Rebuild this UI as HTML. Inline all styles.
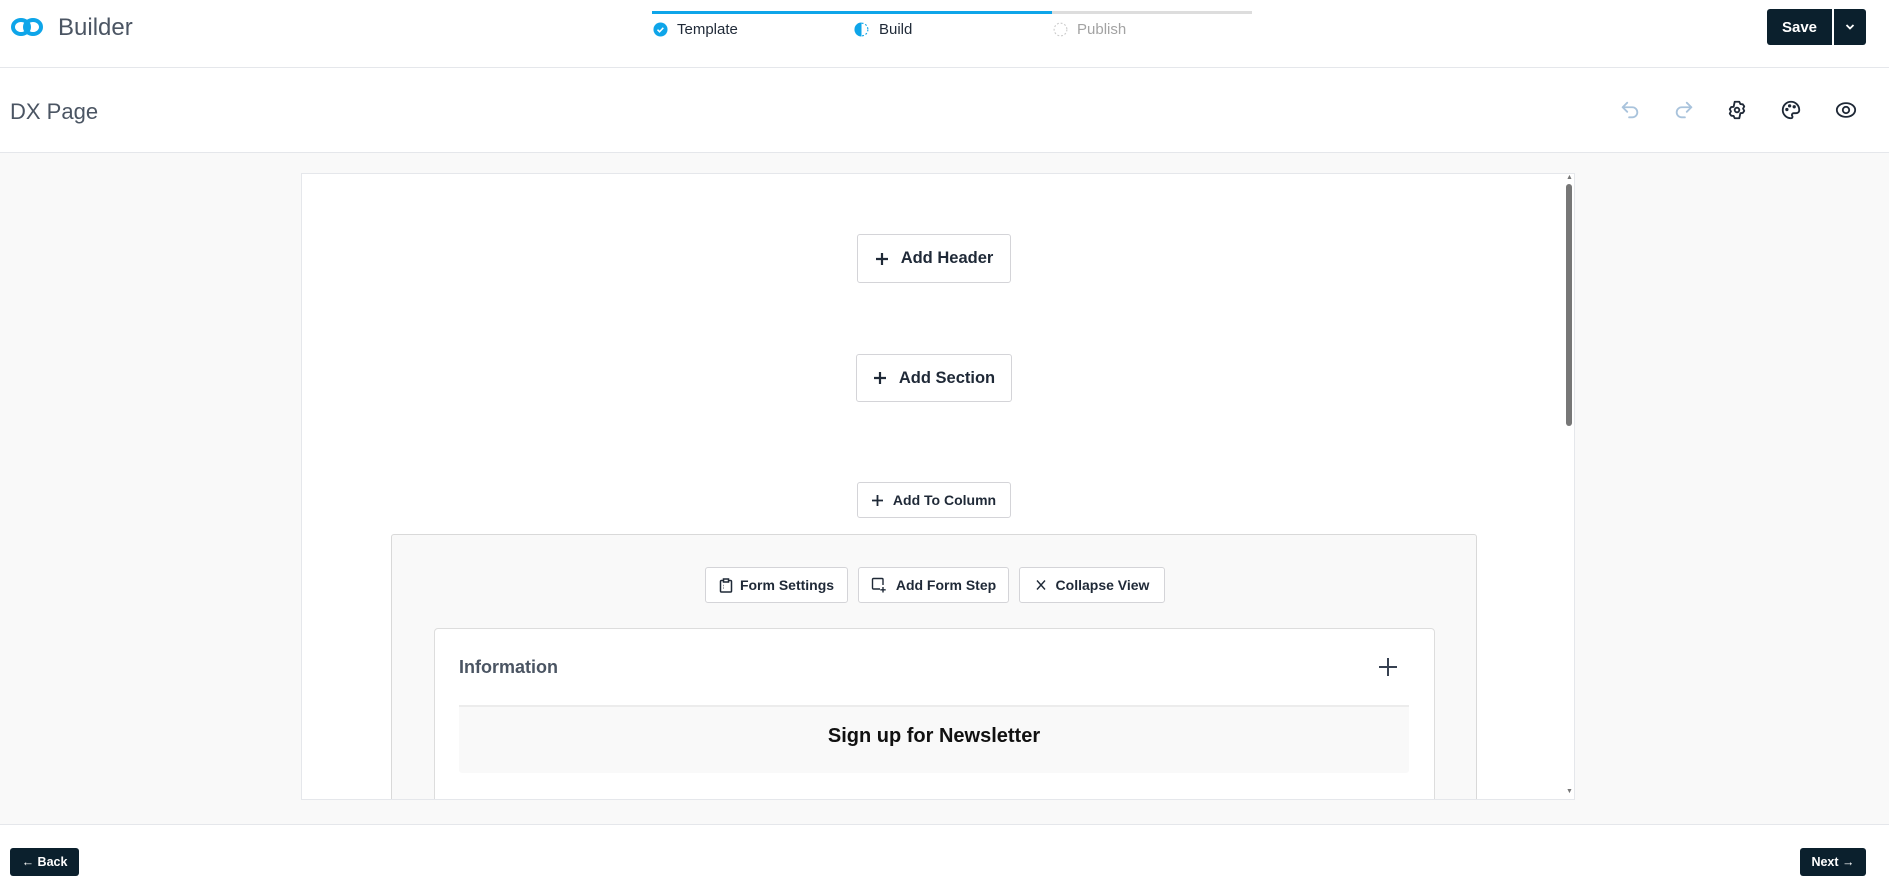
<!DOCTYPE html>
<html><head><meta charset="utf-8"><style>
*{box-sizing:border-box;margin:0;padding:0}
body{width:1889px;height:889px;position:relative;background:#fff;font-family:"Liberation Sans",Arial,sans-serif;overflow:hidden;color:#1f2937}
.abs{position:absolute}
.btn{position:absolute;background:#fff;border:1px solid #d4d4d8;border-radius:3px;display:flex;align-items:center;justify-content:center;font-weight:700;color:#1f2937;white-space:nowrap}
.dark{position:absolute;background:#0b202d;color:#fff;border-radius:3px;font-weight:700;display:flex;align-items:center;justify-content:center}
svg{display:block}
</style></head><body>
<div class="abs" style="left:0;top:67px;width:1889px;height:1px;background:#e5e7eb"></div>
<svg class="abs" style="left:10px;top:16px" width="34" height="22" viewBox="0 0 34 22"><g fill="none" stroke="#0ea5e9" stroke-width="4"><ellipse cx="11" cy="11" rx="8" ry="7"/><ellipse cx="23" cy="11" rx="8" ry="7"/></g></svg>
<div class="abs" style="left:58px;top:14px;font-size:24px;color:#4b5563">Builder</div>
<div class="abs" style="left:652px;top:11px;width:600px;height:3px;background:#ddd"></div>
<div class="abs" style="left:652px;top:11px;width:400px;height:3px;background:#0ea5e9"></div>
<svg class="abs" style="left:653px;top:22px" width="15" height="15" viewBox="0 0 16 16"><circle cx="8" cy="8" r="7.5" fill="#0ea5e9"/><path d="M4.8 8.2l2.2 2.2 4-4.2" stroke="#fff" stroke-width="1.6" fill="none"/></svg>
<div class="abs" style="left:677px;top:21px;font-size:15px;color:#1f2937">Template</div>
<svg class="abs" style="left:854px;top:22px" width="15" height="15" viewBox="0 0 16 16"><path d="M8 .5A7.5 7.5 0 0 0 8 15.5Z" fill="#0ea5e9"/><circle cx="8" cy="8" r="6.8" fill="none" stroke="#0ea5e9" stroke-width="1.2" stroke-dasharray="2 2"/></svg>
<div class="abs" style="left:879px;top:21px;font-size:15px">Build</div>
<svg class="abs" style="left:1053px;top:22px" width="15" height="15" viewBox="0 0 16 16"><circle cx="8" cy="8" r="6.8" fill="none" stroke="#ccc" stroke-width="1.2" stroke-dasharray="2 2"/></svg>
<div class="abs" style="left:1077px;top:21px;font-size:15px;color:#a3a3a3">Publish</div>
<div class="dark" style="left:1767px;top:9px;width:65px;height:36px;font-size:15px;border-radius:3px 0 0 3px">Save</div>
<div class="dark" style="left:1834px;top:9px;width:32px;height:36px;border-radius:0 3px 3px 0"><svg width="10" height="6" viewBox="0 0 10 6"><path d="M1.5 1l3.5 3.5L8.5 1" stroke="#fff" stroke-width="1.8" fill="none"/></svg></div>
<div class="abs" style="left:10px;top:99px;font-size:22px;color:#4b5563">DX Page</div>
<svg class="abs" style="left:1619px;top:99px" width="22" height="22" viewBox="0 0 24 24" fill="none" stroke="#a9c3dc" stroke-width="2" stroke-linecap="round" stroke-linejoin="round"><path d="M9 14L4 9l5-5"/><path d="M4 9h10.5a5.5 5.5 0 0 1 0 11H11"/></svg>
<svg class="abs" style="left:1673px;top:99px" width="22" height="22" viewBox="0 0 24 24" fill="none" stroke="#a9c3dc" stroke-width="2" stroke-linecap="round" stroke-linejoin="round"><path d="M15 14l5-5-5-5"/><path d="M20 9H9.5a5.5 5.5 0 0 0 0 11H13"/></svg>
<svg class="abs" style="left:1726px;top:99px" width="22" height="22" viewBox="0 0 24 24" fill="none" stroke="#1f2937" stroke-width="2" stroke-linejoin="round"><path d="M9.5 3h5l1.2 2.5 2.7.3 1.5 2.3-1.3 2.4 1.3 2.4-1.5 2.3-2.7.3L14.5 21h-5l-1.2-2.5-2.7-.3-1.5-2.3L5.4 13.5 4.1 11.1l1.5-2.3 2.7-.3z"/><circle cx="12" cy="12" r="2.5"/></svg>
<svg class="abs" style="left:1780px;top:99px" width="22" height="22" viewBox="0 0 24 24" fill="none" stroke="#1f2937" stroke-width="2" stroke-linejoin="round"><path d="M12 21a9 9 0 1 1 9-9c0 2.5-2 3.5-4 3.5h-2a2 2 0 0 0-1.5 3.3c.6.8 0 2.2-1.5 2.2z"/><circle cx="7.5" cy="11.5" r=".8" fill="#1f2937"/><circle cx="10.5" cy="7.5" r=".8" fill="#1f2937"/><circle cx="15.5" cy="8.5" r=".8" fill="#1f2937"/></svg>
<svg class="abs" style="left:1835px;top:99px" width="22" height="22" viewBox="0 0 24 24" fill="none" stroke="#1f2937" stroke-width="2"><ellipse cx="12" cy="12" rx="10" ry="7.5"/><circle cx="12" cy="12" r="3.5"/></svg>
<div class="abs" style="left:0;top:152px;width:1889px;height:673px;background:#f9f9f9;border-top:1px solid #e5e7eb;border-bottom:1px solid #e5e7eb"></div>
<div class="abs" style="left:301px;top:173px;width:1274px;height:627px;background:#fff;border:1px solid #e5e7eb;overflow:hidden">
  <div class="btn" style="left:555px;top:60px;width:154px;height:49px;font-size:16.5px"><svg width="14" height="14" viewBox="0 0 14 14" style="margin-right:12px"><path d="M7 1v12M1 7h12" stroke="#1f2937" stroke-width="2.2"/></svg>Add Header</div>
  <div class="btn" style="left:554px;top:180px;width:156px;height:48px;font-size:16.5px"><svg width="14" height="14" viewBox="0 0 14 14" style="margin-right:12px"><path d="M7 1v12M1 7h12" stroke="#1f2937" stroke-width="2.2"/></svg>Add Section</div>
  <div class="btn" style="left:555px;top:308px;width:154px;height:36px;font-size:14px"><svg width="11" height="11" viewBox="0 0 11 11" style="margin-right:10px"><path d="M5.5 0v11M0 5.5h11" stroke="#1f2937" stroke-width="1.8"/></svg>Add To Column</div>
  <div class="abs" style="left:89px;top:360px;width:1086px;height:300px;background:#f9f9f9;border:1px solid #d9d9d9;border-radius:3px">
    <div class="btn" style="left:313px;top:32px;width:143px;height:36px;font-size:14px"><svg width="14" height="15" viewBox="0 0 14 15" style="margin-right:7px" fill="none" stroke="#1f2937" stroke-width="1.5"><rect x="1.5" y="2.5" width="11" height="11.5" rx="1"/><rect x="4.5" y="1" width="5" height="3" fill="#fff"/><path d="M4.5 7.5h.5M4.5 10h.5"/></svg>Form Settings</div>
    <div class="btn" style="left:466px;top:32px;width:151px;height:36px;font-size:14px"><svg width="16" height="16" viewBox="0 0 16 16" style="margin-right:9px" fill="none" stroke="#1f2937" stroke-width="1.4"><path d="M9 12H2.5a1 1 0 0 1-1-1V2.5a1 1 0 0 1 1-1H11a1 1 0 0 1 1 1V8"/><path d="M12 10v5.5M9.3 12.8h5.4"/></svg>Add Form Step</div>
    <div class="btn" style="left:627px;top:32px;width:146px;height:36px;font-size:14px"><svg width="12" height="12" viewBox="0 0 12 12" style="margin-right:9px" fill="none" stroke="#1f2937" stroke-width="1.4"><path d="M2 1.5l8 9M10 1.5l-8 9"/></svg>Collapse View</div>
    <div class="abs" style="left:42px;top:93px;width:1001px;height:220px;background:#fff;border:1px solid #ddd;border-radius:4px">
      <div class="abs" style="left:24px;top:28px;font-size:18px;font-weight:700;color:#4b5563">Information</div>
      <svg class="abs" style="left:944px;top:29px" width="18" height="18" viewBox="0 0 18 18"><path d="M9 0v18M0 9h18" stroke="#374151" stroke-width="2"/></svg>
      <div class="abs" style="left:24px;top:76px;width:950px;height:68px;background:#f9f9f9;border-top:2px solid #ececec;border-radius:0 0 3px 3px;text-align:center;padding-top:18px;font-size:20px;font-weight:700;color:#111">Sign up for Newsletter</div>
    </div>
  </div>
  <div class="abs" style="left:1264px;top:10px;width:6px;height:242px;background:#777;border-radius:3px"></div>
  <div class="abs" style="left:1264px;top:0;font-size:7px;color:#777">▲</div>
  <div class="abs" style="left:1264px;top:614px;font-size:7px;color:#777">▼</div>
</div>
<div class="dark" style="left:10px;top:848px;width:69px;height:28px;font-size:12.5px">&#8592; Back</div>
<div class="dark" style="left:1800px;top:848px;width:66px;height:28px;font-size:12.5px">Next &#8594;</div>
</body></html>
